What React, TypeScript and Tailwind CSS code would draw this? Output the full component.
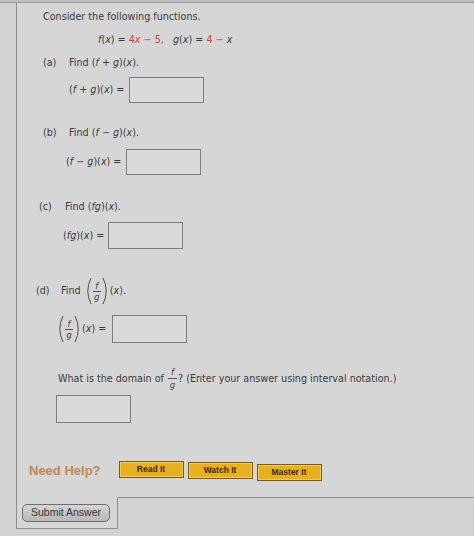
import React from "react";

const I = ({ children }: { children: React.ReactNode }) => <span className="italic">{children}</span>;

const Frac = ({ tall = false }: { tall?: boolean }) => (
  <span className={`inline-flex flex-col items-center text-[8.5px] mx-[1px] ${tall ? "leading-[12px]" : "leading-[10px]"}`}>
    <span className="italic">f</span>
    <span className={`block h-px bg-[#555] ${tall ? "w-[9px]" : "w-[8px]"}`} />
    <span className="italic">g</span>
  </span>
);

const BigParenFrac = () => (
  <span className="inline-flex items-center">
    <svg width="8" height="28" viewBox="0 0 8 28" className="block">
      <path d="M7 1 Q0.5 14 7 27" fill="none" stroke="#4a4a4a" strokeWidth="1" />
    </svg>
    <Frac />
    <svg width="8" height="28" viewBox="0 0 8 28" className="block">
      <path d="M1 1 Q7.5 14 1 27" fill="none" stroke="#4a4a4a" strokeWidth="1" />
    </svg>
  </span>
);

const Box = ({ h = "h-[26px]" }: { h?: string }) => (
  <div className={`w-[75px] ${h} border border-[#7d7d7d] bg-[#dadada]`} />
);

const GoldBtn = ({ label }: { label: string }) => (
  <div className="w-[65px] h-[17px] border border-[#7a5a1c] bg-[#e6b020] flex items-center justify-center shadow-[inset_0_0_0_1px_#f2cd55]">
    <span className="text-[8.5px] font-bold text-[#3e2c0e] font-['Liberation_Sans',Arial,sans-serif] leading-none">{label}</span>
  </div>
);

export default function App() {
  return (
    <div className="w-[474px] h-[536px] overflow-hidden bg-[#d2d2d3] text-[#3a3a3a] font-['DejaVu_Sans',Verdana,sans-serif] text-[9.6px] leading-[14px]">
      <div className="h-[3px] bg-[#bdbdbf] border-b border-[#9c9c9e]" />
      <div className="ml-[16px] border-l border-[#8e8e90] bg-[#d6d6d7] h-[495px] flex flex-col">
        <div className="mt-[7px] h-[14px] pl-[26px]">Consider the following functions.</div>
        <div className="mt-[9px] h-[14px] pl-[81px] whitespace-pre">
          <I>f</I>(<I>x</I>) = <span className="text-[#c4473f]">4<I>x</I> − 5,</span>{"   "}<I>g</I>(<I>x</I>) = <span className="text-[#c4473f]">4 −</span> <I>x</I>
        </div>
        <div className="mt-[9px] h-[14px] pl-[26px] flex whitespace-pre">
          <span className="w-[26px]">(a)</span>
          <span>Find (<I>f</I> + <I>g</I>)(<I>x</I>).</span>
        </div>
        <div className="mt-[7px] h-[26px] pl-[52px] flex items-center gap-[5px] whitespace-pre">
          <span>(<I>f</I> + <I>g</I>)(<I>x</I>) =</span>
          <Box />
        </div>
        <div className="mt-[23px] h-[14px] pl-[26px] flex whitespace-pre">
          <span className="w-[26px]">(b)</span>
          <span>Find (<I>f</I> − <I>g</I>)(<I>x</I>).</span>
        </div>
        <div className="mt-[9px] h-[26px] pl-[49px] flex items-center gap-[5px] whitespace-pre">
          <span>(<I>f</I> − <I>g</I>)(<I>x</I>) =</span>
          <Box />
        </div>
        <div className="mt-[25px] h-[14px] pl-[22px] flex whitespace-pre">
          <span className="w-[26px]">(c)</span>
          <span>Find (<I>fg</I>)(<I>x</I>).</span>
        </div>
        <div className="mt-[8px] h-[27px] pl-[46px] flex items-center gap-[4px] whitespace-pre">
          <span>(<I>fg</I>)(<I>x</I>) =</span>
          <Box h="h-[27px]" />
        </div>
        <div className="mt-[28px] h-[28px] pl-[19px] flex items-center whitespace-pre">
          <span className="w-[25px]">(d)</span>
          <span>Find </span>
          <BigParenFrac />
          <span>(<I>x</I>).</span>
        </div>
        <div className="mt-[10px] h-[28px] pl-[39px] flex items-center whitespace-pre">
          <BigParenFrac />
          <span>(<I>x</I>) =</span>
          <span className="w-[6px]" />
          <Box h="h-[28px]" />
        </div>
        <div className="mt-[22px] h-[27px] pl-[41px] flex items-center whitespace-pre">
          <span>What is the domain of </span>
          <Frac tall />
          <span>? (Enter your answer using interval notation.)</span>
        </div>
        <div className="mt-[3px] pl-[39px]">
          <Box h="h-[28px]" />
        </div>
        <div className="mt-[37px] h-[22px] pl-[12px] flex items-center">
          <span className="text-[13px] font-bold text-[#c0874f] font-['Liberation_Sans',Arial,sans-serif] mr-[18px]">Need Help?</span>
          <div className="flex gap-[4px] items-start">
            <GoldBtn label="Read It" />
            <div className="mt-[1px]"><GoldBtn label="Watch It" /></div>
            <div className="mt-[3px]"><GoldBtn label="Master It" /></div>
          </div>
        </div>
      </div>
      <div className="flex -mt-[1px]">
        <div className="ml-[16px] w-[102px] h-[32px] border-l border-b border-r border-[#8e8e90] bg-[#d6d6d7] flex items-center pl-[5px]">
          <div className="w-[88px] h-[18px] rounded-[5px] border border-[#6e6e6e] bg-gradient-to-b from-[#d4d4d4] to-[#b8b8b8] flex items-center justify-center">
            <span className="text-[10.5px] text-[#333] font-['Liberation_Sans',Arial,sans-serif] leading-none">Submit Answer</span>
          </div>
        </div>
        <div className="flex-1 border-t border-[#8e8e90]" />
      </div>
    </div>
  );
}
